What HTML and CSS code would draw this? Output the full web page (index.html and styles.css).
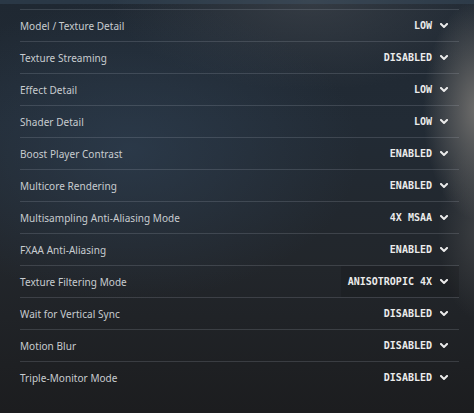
FILE: index.html
```html
<!DOCTYPE html>
<html lang="en">
<head>
<meta charset="utf-8">
<title>Video Settings</title>
<link rel="stylesheet" href="styles.css">
</head>
<body>
<div class="topstrip"></div>
<div class="panel">
  <ul class="settings">
    <li class="row"><span class="label">Model / Texture Detail</span><span class="drop"><span class="value">LOW</span><svg class="chev" viewBox="0 0 8 5"><path d="M1 1 L4 4 L7 1"/></svg></span></li>
    <li class="row"><span class="label">Texture Streaming</span><span class="drop"><span class="value">DISABLED</span><svg class="chev" viewBox="0 0 8 5"><path d="M1 1 L4 4 L7 1"/></svg></span></li>
    <li class="row"><span class="label">Effect Detail</span><span class="drop"><span class="value">LOW</span><svg class="chev" viewBox="0 0 8 5"><path d="M1 1 L4 4 L7 1"/></svg></span></li>
    <li class="row"><span class="label">Shader Detail</span><span class="drop"><span class="value">LOW</span><svg class="chev" viewBox="0 0 8 5"><path d="M1 1 L4 4 L7 1"/></svg></span></li>
    <li class="row"><span class="label">Boost Player Contrast</span><span class="drop"><span class="value">ENABLED</span><svg class="chev" viewBox="0 0 8 5"><path d="M1 1 L4 4 L7 1"/></svg></span></li>
    <li class="row"><span class="label">Multicore Rendering</span><span class="drop"><span class="value">ENABLED</span><svg class="chev" viewBox="0 0 8 5"><path d="M1 1 L4 4 L7 1"/></svg></span></li>
    <li class="row"><span class="label">Multisampling Anti-Aliasing Mode</span><span class="drop"><span class="value">4X MSAA</span><svg class="chev" viewBox="0 0 8 5"><path d="M1 1 L4 4 L7 1"/></svg></span></li>
    <li class="row"><span class="label">FXAA Anti-Aliasing</span><span class="drop"><span class="value">ENABLED</span><svg class="chev" viewBox="0 0 8 5"><path d="M1 1 L4 4 L7 1"/></svg></span></li>
    <li class="row"><span class="label">Texture Filtering Mode</span><span class="drop hover"><span class="value">ANISOTROPIC 4X</span><svg class="chev" viewBox="0 0 8 5"><path d="M1 1 L4 4 L7 1"/></svg></span></li>
    <li class="row"><span class="label">Wait for Vertical Sync</span><span class="drop"><span class="value">DISABLED</span><svg class="chev" viewBox="0 0 8 5"><path d="M1 1 L4 4 L7 1"/></svg></span></li>
    <li class="row"><span class="label">Motion Blur</span><span class="drop"><span class="value">DISABLED</span><svg class="chev" viewBox="0 0 8 5"><path d="M1 1 L4 4 L7 1"/></svg></span></li>
    <li class="row"><span class="label">Triple-Monitor Mode</span><span class="drop"><span class="value">DISABLED</span><svg class="chev" viewBox="0 0 8 5"><path d="M1 1 L4 4 L7 1"/></svg></span></li>
  </ul>
  <div class="footer"></div>
</div>
</body>
</html>
```

FILE: styles.css
```css
html, body {
  margin: 0;
  padding: 0;
}

body {
  width: 474px;
  height: 413px;
  overflow: hidden;
  background:
    radial-gradient(ellipse 55px 110px at 478px 110px, rgba(125,122,118,0.85), rgba(125,122,118,0) 100%),
    radial-gradient(ellipse 40px 90px at 478px 230px, rgba(90,90,90,0.45), rgba(90,90,90,0) 100%),
    radial-gradient(ellipse 230px 150px at 130px 150px, rgba(48,66,86,0.6), rgba(48,66,86,0) 100%),
    radial-gradient(ellipse 200px 90px at 310px 0px, rgba(70,75,82,0.55), rgba(70,75,82,0) 100%),
    linear-gradient(180deg, #1f2832 0%, #222b35 30%, #22262b 65%, #1c1d1f 100%);
  font-family: "Noto Sans", "DejaVu Sans", sans-serif;
}

.topstrip {
  height: 4px;
  background: rgba(70, 95, 120, 0.3);
}

.panel {
  padding: 5px 15px 0 20px;
}

.settings {
  list-style: none;
  margin: 0;
  padding: 0;
}

.row {
  display: flex;
  align-items: center;
  justify-content: space-between;
  height: 31px;
  border-top: 1px solid rgba(200, 210, 220, 0.17);
}

.label {
  color: #c8ccd0;
  font-size: 10px;
  letter-spacing: 0.05px;
}

.drop {
  display: flex;
  align-items: center;
  gap: 8px;
  height: 31px;
  padding: 0 11px 0 7px;
}

.drop.hover {
  background: rgba(10, 12, 14, 0.16);
}

.value {
  color: #ebebeb;
  font-family: "DejaVu Sans Mono", monospace;
  font-weight: bold;
  font-size: 10px;
  letter-spacing: 0;
}

.chev {
  width: 8px;
  height: 5px;
  fill: none;
  stroke: #ebebeb;
  stroke-width: 2;
  stroke-linecap: square;
}

.footer {
  height: 15px;
}
```
